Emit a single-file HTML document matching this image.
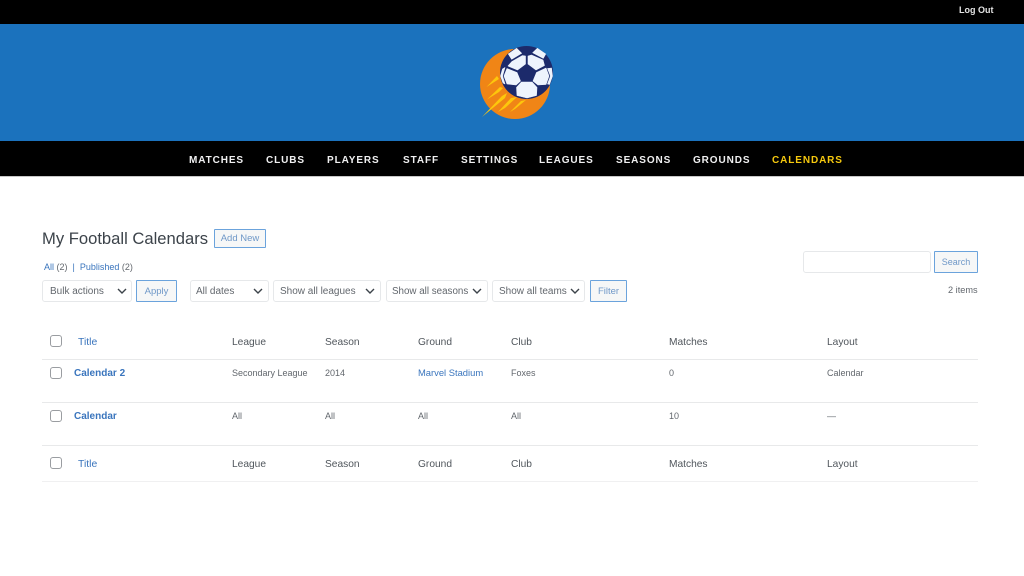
<!DOCTYPE html>
<html lang="en"><head><meta charset="utf-8"><title>My Football Calendars</title>
<style>
html,body{margin:0;padding:0;background:#fff}
body{width:1024px;height:576px;position:relative;overflow:hidden;font-family:"Liberation Sans",sans-serif;color:#62676d}
.t{position:absolute;white-space:nowrap;line-height:14px;font-size:10px}
.h{font-size:10.2px;color:#50565c}
.d{font-size:9px}
.a{color:#3a75bd}
.b{font-weight:bold}
.n{position:absolute;top:154px;white-space:nowrap;font-weight:bold;font-size:10px;line-height:14px;letter-spacing:.9px;color:#f0f0f1}
.box{position:absolute;box-sizing:border-box;border-radius:2px}
.sel{height:22px;top:280px;border:1px solid #e6e8ea;background:#fff;border-radius:3px}
.btn{border:1px solid #6ba3dc;background:#f6f7f7;color:#6f98c8;font-size:9.5px;text-align:center;line-height:20px;border-radius:1px}
.cb{position:absolute;left:50px;width:12px;height:12px;box-sizing:border-box;border:1px solid #9a9da1;border-radius:3px;background:#fff}
.l{position:absolute;left:42px;width:936px;height:1px;background:#e8e9ea}
svg.c{position:absolute;top:287px;width:10px;height:8px}
</style></head><body>
<div style="position:absolute;left:0;top:0;width:1024px;height:24px;background:#000"></div>
<div class="t" style="left:959px;top:3px;color:#e4e4e4;font-size:9px;font-weight:bold">Log Out</div>
<div style="position:absolute;left:0;top:24px;width:1024px;height:117px;background:#1b72bd"></div>
<svg style="position:absolute;left:470px;top:40px" width="95" height="85" viewBox="470 40 95 85">
<circle cx="515" cy="84" r="35" fill="#f08516"/>
<g fill="#fdc70c">
<path d="M482 117 L502 96 L507 93 L505 98 Z"/>
<path d="M487 99.5 L500 87 L503 88 L499 92 Z"/>
<path d="M486.5 87 L497 76 L499 79 Z"/>
<path d="M498 112 L511 98 L517 97 L505 108 Z"/>
<path d="M510 112 L521 101 L526 100 L515 109 Z"/>
</g>
<circle cx="526.5" cy="72.5" r="26.5" fill="#1c2a6b"/>
<g fill="#eef4fd" stroke="#eef4fd" stroke-width=".6" stroke-linejoin="round">
<path d="M508.3 54 L516.7 48.3 L521.7 53.3 L511.7 59.3Z"/>
<path d="M532.7 52.7 L537.3 48.3 L545.7 54 L543.3 58.3Z"/>
<path d="M525.5 56 L525.5 64 L517.5 70 L508 66 L512 61.5 L522.5 55.5Z"/>
<path d="M528 56 L528 64 L536 70 L544.5 65.5 L543 60 L531.5 55Z"/>
<path d="M507 68.5 L517 72.5 L520.5 81 L516 85 L507 84 L504 76Z"/>
<path d="M536.5 72.5 L546 68 L549 76 L546 84.5 L538 85 L533 81Z"/>
<path d="M547.5 68.5 L551.5 68 L552.5 76 L549.5 84.5 L547.5 84 L550.5 76Z"/>
<path d="M502.5 69 L505 67.5 L502.5 76 L505 84 L503 83 L500.5 76Z"/>
<path d="M521.5 82 L532 82 L537 87.5 L536.5 95.5 L527 98 L517 95.5 L516.5 87.5Z"/>
</g>
</svg>
<div style="position:absolute;left:0;top:141px;width:1024px;height:36px;background:#000;border-bottom:1px solid #c8c8c8;box-sizing:border-box"></div>
<div class="n" style="left:189px">MATCHES</div>
<div class="n" style="left:266px">CLUBS</div>
<div class="n" style="left:327px">PLAYERS</div>
<div class="n" style="left:403px">STAFF</div>
<div class="n" style="left:461px">SETTINGS</div>
<div class="n" style="left:539px">LEAGUES</div>
<div class="n" style="left:616px">SEASONS</div>
<div class="n" style="left:693px">GROUNDS</div>
<div class="n" style="left:772px;color:#f6c90e">CALENDARS</div>

<div class="t" style="left:42px;top:229px;font-size:16.6px;line-height:20px;color:#3c434a">My Football Calendars</div>
<div class="box btn" style="left:214px;top:229px;width:52px;height:19px;line-height:18px;font-size:9.5px">Add New</div>
<div class="t" style="left:44px;top:260px;font-size:9px"><span class="a">All</span> (2) &nbsp;<span class="a">|</span>&nbsp; <span class="a">Published</span> (2)</div>

<div class="box sel" style="left:42px;width:90px"></div>
<div class="t" style="left:50px;top:285px">Bulk actions</div>
<div class="box btn" style="left:136px;top:280px;width:41px;height:22px;line-height:21px">Apply</div>
<div class="box sel" style="left:190px;width:79px"></div>
<div class="t" style="left:196px;top:285px">All dates</div>
<div class="box sel" style="left:273px;width:108px"></div>
<div class="t" style="left:280px;top:285px">Show all leagues</div>
<div class="box sel" style="left:386px;width:102px"></div>
<div class="t" style="left:392px;top:285px;font-size:9.8px">Show all seasons</div>
<div class="box sel" style="left:492px;width:93px"></div>
<div class="t" style="left:499px;top:285px">Show all teams</div>
<div class="box btn" style="left:590px;top:280px;width:37px;height:22px;line-height:21px">Filter</div>
<svg class="c" style="left:117px" viewBox="0 0 10 8"><path d="M1 2 L5 6 L9 2" fill="none" stroke="#3c434a" stroke-width="1.4"/></svg>
<svg class="c" style="left:253px" viewBox="0 0 10 8"><path d="M1 2 L5 6 L9 2" fill="none" stroke="#3c434a" stroke-width="1.4"/></svg>
<svg class="c" style="left:365px" viewBox="0 0 10 8"><path d="M1 2 L5 6 L9 2" fill="none" stroke="#3c434a" stroke-width="1.4"/></svg>
<svg class="c" style="left:472px" viewBox="0 0 10 8"><path d="M1 2 L5 6 L9 2" fill="none" stroke="#3c434a" stroke-width="1.4"/></svg>
<svg class="c" style="left:570px" viewBox="0 0 10 8"><path d="M1 2 L5 6 L9 2" fill="none" stroke="#3c434a" stroke-width="1.4"/></svg>

<div class="box" style="left:803px;top:251px;width:128px;height:22px;border:1px solid #e6e8ea;border-radius:3px;background:#fff"></div>
<div class="box btn" style="left:934px;top:251px;width:44px;height:22px;font-size:9px">Search</div>
<div class="t" style="left:948px;top:283px;font-size:9.2px">2 items</div>

<div class="cb" style="top:335px"></div>
<div class="t a" style="left:78px;top:336px;font-size:10.4px">Title</div>
<div class="t h" style="left:232px;top:336px">League</div>
<div class="t h" style="left:325px;top:336px">Season</div>
<div class="t h" style="left:418px;top:336px">Ground</div>
<div class="t h" style="left:511px;top:336px">Club</div>
<div class="t h" style="left:669px;top:336px">Matches</div>
<div class="t h" style="left:827px;top:336px">Layout</div>
<div class="l" style="top:359px"></div>

<div class="cb" style="top:367px"></div>
<div class="t a b" style="left:74px;top:367px;font-size:10px">Calendar 2</div>
<div class="t d" style="left:232px;top:366px">Secondary League</div>
<div class="t d" style="left:325px;top:366px">2014</div>
<div class="t d a" style="left:418px;top:366px;font-size:9.4px">Marvel Stadium</div>
<div class="t d" style="left:511px;top:366px">Foxes</div>
<div class="t d" style="left:669px;top:366px">0</div>
<div class="t d" style="left:827px;top:366px">Calendar</div>
<div class="l" style="top:402px"></div>

<div class="cb" style="top:410px"></div>
<div class="t a b" style="left:74px;top:410px;font-size:10px">Calendar</div>
<div class="t d" style="left:232px;top:409px">All</div>
<div class="t d" style="left:325px;top:409px">All</div>
<div class="t d" style="left:418px;top:409px">All</div>
<div class="t d" style="left:511px;top:409px">All</div>
<div class="t d" style="left:669px;top:409px">10</div>
<div class="t d" style="left:827px;top:409px">—</div>
<div class="l" style="top:445px"></div>

<div class="cb" style="top:457px"></div>
<div class="t a" style="left:78px;top:458px;font-size:10.4px">Title</div>
<div class="t h" style="left:232px;top:458px">League</div>
<div class="t h" style="left:325px;top:458px">Season</div>
<div class="t h" style="left:418px;top:458px">Ground</div>
<div class="t h" style="left:511px;top:458px">Club</div>
<div class="t h" style="left:669px;top:458px">Matches</div>
<div class="t h" style="left:827px;top:458px">Layout</div>
<div class="l" style="top:481px;background:#f0f0f1"></div>
</body></html>
